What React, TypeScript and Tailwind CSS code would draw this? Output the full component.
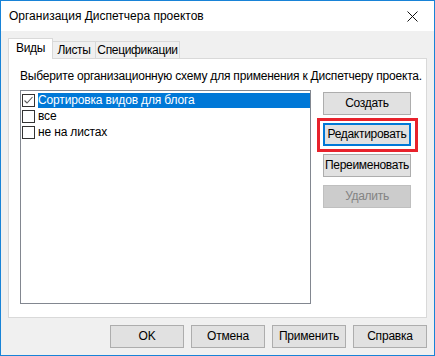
function Btn({ label, focused, disabled }: { label: string; focused?: boolean; disabled?: boolean }) {
  if (disabled) {
    return (
      <div className="flex h-[23px] w-[88px] items-center justify-center border border-[#bfbfbf] bg-[#cccccc] tracking-[-0.3px] text-[#838383]">
        {label}
      </div>
    );
  }
  if (focused) {
    return (
      <div className="flex h-[23px] w-[88px] items-center justify-center border-2 border-[#0078d7] bg-[#e1e1e1] tracking-[-0.3px] text-black">
        {label}
      </div>
    );
  }
  return (
    <div className="flex h-[23px] w-[88px] items-center justify-center border border-[#adadad] bg-[#e1e1e1] tracking-[-0.3px] text-black">
      {label}
    </div>
  );
}

function BottomBtn({ label }: { label: string }) {
  return (
    <div className="flex h-[23px] w-[74px] items-center justify-center border border-[#adadad] bg-[#e1e1e1] tracking-[-0.2px] text-black">
      {label}
    </div>
  );
}

function Check({ checked }: { checked?: boolean }) {
  return (
    <div className="flex h-[13px] w-[13px] shrink-0 items-center justify-center border border-[#333333] bg-white">
      {checked && (
        <svg width="11" height="11" viewBox="0 0 11 11">
          <path d="M1.5 5.5 L4 8 L9.5 2" fill="none" stroke="#5a5a5a" strokeWidth="1.1" />
        </svg>
      )}
    </div>
  );
}

function Item({ label, checked, selected }: { label: string; checked?: boolean; selected?: boolean }) {
  return (
    <div className="flex h-[16px] items-center">
      <div className="ml-[1px] mr-[3px]">
        <Check checked={checked} />
      </div>
      <div
        className={
          selected
            ? "flex h-[15px] flex-1 items-center bg-[#0078d7] tracking-[-0.15px] text-white"
            : "flex h-[15px] flex-1 items-center tracking-[-0.15px] text-black"
        }
      >
        {label}
      </div>
    </div>
  );
}

export default function App() {
  return (
    <div
      className="flex h-[356px] w-[435px] flex-col border border-[#1883d7] bg-[#f0f0f0] text-[12px] leading-[15px] text-black"
      style={{ fontFamily: "'Liberation Sans', Arial, sans-serif" }}
    >
      {/* title bar */}
      <div className="flex h-[30px] shrink-0 items-center justify-between bg-white pl-[8px] pr-[16px]">
        <span>Организация Диспетчера проектов</span>
        <svg width="11" height="11" viewBox="0 0 11 11">
          <path d="M0.5 0.5 L10.5 10.5 M10.5 0.5 L0.5 10.5" stroke="#111" strokeWidth="1" />
        </svg>
      </div>

      {/* body */}
      <div className="flex flex-1 flex-col px-[7px] pt-[7px]">
        {/* tabs */}
        <div className="flex h-[20px] items-end tracking-[-0.35px]">
          <div className="relative z-10 mb-[-1px] flex h-[21px] w-[45px] items-center justify-center border border-b-0 border-[#d9d9d9] bg-white pb-[1px]">
            Виды
          </div>
          <div className="flex h-[17px] w-[43px] items-center justify-center border border-b-0 border-l-0 border-[#d9d9d9] bg-[#f0f0f0]">
            Листы
          </div>
          <div className="flex h-[17px] w-[84px] items-center justify-center border border-b-0 border-l-0 border-[#d9d9d9] bg-[#f0f0f0]">
            Спецификации
          </div>
        </div>

        {/* panel */}
        <div className="flex h-[260px] flex-col border border-[#d9d9d9] bg-white pl-[11px] pt-[10px]">
          <div className="whitespace-nowrap tracking-[-0.2px]">
            Выберите организационную схему для применения к Диспетчеру проекта.
          </div>
          <div className="mt-[6px] flex gap-[12px]">
            <div className="flex h-[214px] w-[291px] flex-col border border-[#828790] bg-white pt-[1px]">
              <Item label="Сортировка видов для блога" checked selected />
              <Item label="все" />
              <Item label="не на листах" />
            </div>
            <div className="flex flex-col gap-[8px] pt-[2px]">
              <Btn label="Создать" />
              <div className="relative">
                <Btn label="Редактировать" focused />
                <div className="pointer-events-none absolute -bottom-[6px] -left-[6px] -right-[7px] -top-[5px] border-[3px] border-[#e8222c]" />
              </div>
              <Btn label="Переименовать" />
              <Btn label="Удалить" disabled />
            </div>
          </div>
        </div>

        {/* bottom buttons */}
        <div className="mt-[7px] flex justify-end gap-[7px]">
          <BottomBtn label="OK" />
          <BottomBtn label="Отмена" />
          <BottomBtn label="Применить" />
          <BottomBtn label="Справка" />
        </div>
      </div>
    </div>
  );
}
